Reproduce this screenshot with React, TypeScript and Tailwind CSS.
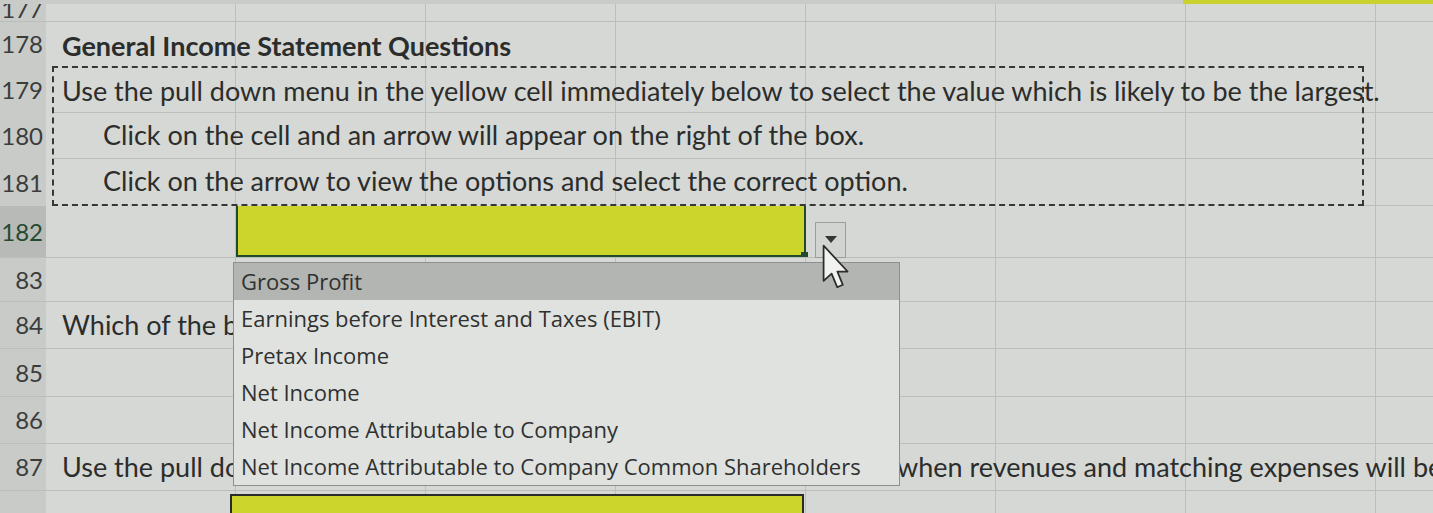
import clsx from "clsx";
import type { ReactNode } from "react";

// vertical gridlines every 190px (one tile per column)
const GRID = "bg-[linear-gradient(to_left,#bcbebb_1px,transparent_1px)] bg-[length:190px_100%]";

function HeaderCell({ label, className, active }: { label: string; className?: string; active?: boolean }) {
  return (
    <div
      className={clsx(
        "flex w-[46px] shrink-0 items-center justify-end pr-[3px] text-[24px] leading-none",
        active ? "bg-[#b8bab7] text-[#244a30]" : "bg-[#c9cbc8] text-[#3b3d3c]",
        className
      )}
    >
      {label}
    </div>
  );
}

function Row({ label, h, active, children }: { label: string; h: string; active?: boolean; children?: ReactNode }) {
  return (
    <div className={clsx("flex border-b border-[#bcbebb]", h)}>
      <HeaderCell label={label} active={active} />
      <div className={clsx("relative flex flex-1 items-center overflow-hidden whitespace-nowrap", GRID)}>{children}</div>
    </div>
  );
}

const options = [
  "Gross Profit",
  "Earnings before Interest and Taxes (EBIT)",
  "Pretax Income",
  "Net Income",
  "Net Income Attributable to Company",
  "Net Income Attributable to Company Common Shareholders",
];

export default function App() {
  return (
    <div className="relative h-[513px] w-[1433px] overflow-hidden bg-[#d6d8d5] font-['Lato',sans-serif] text-[27px] text-[#2b2d2c]">
      {/* bit of a yellow cell from the row above */}
      <div className="flex h-[4px]">
        <div className="w-[1183px] bg-[#c9cbc8]" />
        <div className="flex-1 bg-[#c8d22c]" />
      </div>

      {/* 177, mostly scrolled off */}
      <div className="flex h-[18px] overflow-hidden border-b border-[#bcbebb]">
        <div className="flex w-[46px] shrink-0 items-end justify-end bg-[#c9cbc8] pr-[3px]">
          <span className="-mt-[20px] text-[24px] leading-none text-[#3b3d3c]">177</span>
        </div>
        <div className={clsx("flex-1", GRID)} />
      </div>

      <div className="flex h-[44px]">
        <HeaderCell label="178" />
        <div className={clsx("flex flex-1 items-center pl-[16px] pt-[4px] font-bold", GRID)}>
          General Income Statement Questions
        </div>
      </div>

      {/* dashed box round the instructions */}
      <div className="flex">
        <div className="flex flex-col">
          <HeaderCell label="179" className="h-[47px]" />
          <HeaderCell label="180" className="h-[46px]" />
          <HeaderCell label="181" className="h-[47px]" />
        </div>
        <div className={clsx("flex flex-1", GRID)}>
          <div className="ml-[6px] flex h-[140px] w-[1312px] flex-col whitespace-nowrap border-2 border-dashed border-[#363837]">
            <div className="flex h-[45px] items-center border-b border-[#bcbebb] pl-[8px] pt-[2px]">
              Use the pull down menu in the yellow cell immediately below to select the value which is likely to be the largest.
            </div>
            <div className="flex h-[46px] items-center border-b border-[#bcbebb] pl-[49px]">
              Click on the cell and an arrow will appear on the right of the box.
            </div>
            <div className="flex h-[45px] items-center pl-[49px]">
              Click on the arrow to view the options and select the correct option.
            </div>
          </div>
          <div className="flex flex-1 flex-col">
            <div className="h-[47px] border-b border-[#bcbebb]" />
            <div className="h-[46px] border-b border-[#bcbebb]" />
            <div className="h-[47px] border-b border-[#bcbebb]" />
          </div>
        </div>
      </div>

      <Row label="182" h="h-[52px]" active>
        <div className="relative ml-[190px] h-full w-[570px] border-2 border-t-0 border-[#1f4a2b] bg-[#cbd52b]">
          <div className="absolute -bottom-[4px] -right-[4px] h-[7px] w-[7px] bg-[#1f4a2b]" />
        </div>
      </Row>
      <Row label="83" h="h-[44px]" />
      <Row label="84" h="h-[47px]">
        {/* the rest of the sentence sits under the open list */}
        <span className="w-[187px] shrink-0 overflow-hidden pl-[16px]">Which of the be</span>
      </Row>
      <Row label="85" h="h-[48px]" />
      <Row label="86" h="h-[47px]" />
      <Row label="87" h="h-[47px]">
        <span className="w-[187px] shrink-0 overflow-hidden pl-[16px]">Use the pull down</span>
        <span className="ml-[664px]">when revenues and matching expenses will be</span>
      </Row>
      <div className="flex h-[40px]">
        <HeaderCell label="" />
        <div className={clsx("flex flex-1", GRID)}>
          <div className="ml-[184px] mt-[3px] h-full w-[574px] border-2 border-[#2a2c2b] bg-[#cbd52b]" />
        </div>
      </div>

      {/* data validation arrow */}
      <div className="absolute left-[815px] top-[222px] flex h-[36px] w-[31px] justify-center border border-[#9c9e9b] bg-[#d2d4d1] pt-[13px]">
        <div className="h-0 w-0 border-x-[6px] border-t-[7px] border-x-transparent border-t-[#343635]" />
      </div>

      {/* open list */}
      <div className="absolute left-[233px] top-[262px] flex h-[224px] w-[667px] flex-col border border-[#8e908d] bg-[#e0e2df] font-['Open_Sans',sans-serif] text-[22px] text-[#2f3130]">
        {options.map((o, i) => (
          <div key={o} className={clsx("flex h-[37px] items-center pl-[7px]", i === 0 && "bg-[#b3b5b2]")}>
            {o}
          </div>
        ))}
      </div>

      {/* mouse pointer */}
      <svg className="absolute left-[822px] top-[244px]" width="32" height="48" viewBox="0 0 20 30">
        <path d="M1 1 L1 23 L6 18.5 L9.5 27 L13 25.5 L9.6 17.2 L16 17.2 Z" fill="#f2f3f1" stroke="#2a2c2b" strokeWidth="1.1" strokeLinejoin="round" />
      </svg>
    </div>
  );
}
